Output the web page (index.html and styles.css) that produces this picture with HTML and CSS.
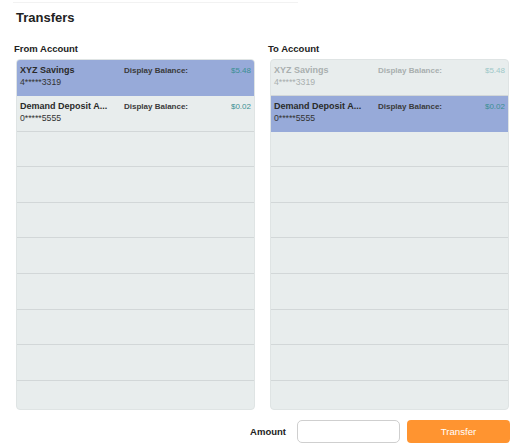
FILE: index.html
```html
<!DOCTYPE html>
<html>
<head>
<meta charset="utf-8">
<link rel="stylesheet" href="styles.css">
</head>
<body>
<div class="page">
  <div class="topline"></div>
  <h1 class="title">Transfers</h1>
  <div class="columns">
    <section class="col">
      <div class="label">From Account</div>
      <div class="list">
        <div class="row selected">
          <div class="name">XYZ Savings</div>
          <div class="dlabel">Display Balance:</div>
          <div class="bal">$5.48</div>
          <div class="num">4*****3319</div>
        </div>
        <div class="row">
          <div class="name" title="Demand Deposit Account">Demand Deposit A...</div>
          <div class="dlabel">Display Balance:</div>
          <div class="bal">$0.02</div>
          <div class="num">0*****5555</div>
        </div>
        <div class="row"></div>
        <div class="row"></div>
        <div class="row"></div>
        <div class="row"></div>
        <div class="row"></div>
        <div class="row"></div>
        <div class="row"></div>
        <div class="row"></div>
      </div>
    </section>
    <section class="col">
      <div class="label">To Account</div>
      <div class="list">
        <div class="row disabled">
          <div class="name">XYZ Savings</div>
          <div class="dlabel">Display Balance:</div>
          <div class="bal">$5.48</div>
          <div class="num">4*****3319</div>
        </div>
        <div class="row selected">
          <div class="name" title="Demand Deposit Account">Demand Deposit A...</div>
          <div class="dlabel">Display Balance:</div>
          <div class="bal">$0.02</div>
          <div class="num">0*****5555</div>
        </div>
        <div class="row"></div>
        <div class="row"></div>
        <div class="row"></div>
        <div class="row"></div>
        <div class="row"></div>
        <div class="row"></div>
        <div class="row"></div>
        <div class="row"></div>
      </div>
    </section>
  </div>
  <div class="actions">
    <label class="amount-label" for="amt">Amount</label>
    <input id="amt" class="amount" type="text">
    <button class="transfer" type="button">Transfer</button>
  </div>
</div>
</body>
</html>
```

FILE: styles.css
```css
* { box-sizing: border-box; }
html, body { margin: 0; padding: 0; background: #fff; }
body {
  font-family: "Liberation Sans", Arial, sans-serif;
  color: #222;
}
.page {
  width: 512px;
  height: 447px;
  padding: 0 3px 0 16px;
  overflow: hidden;
}
.topline {
  margin-top: 2px;
  margin-left: -3px;
  width: 285px;
  height: 1px;
  background: #f2f2f2;
}
.title {
  margin: 6.5px 0 0 0;
  font-size: 13px;
  line-height: 16px;
  font-weight: bold;
  color: #222;
}
.columns {
  display: grid;
  grid-template-columns: 239px 239px;
  column-gap: 15px;
  margin-top: 17.7px;
}
.label {
  font-size: 9.5px;
  line-height: 12px;
  font-weight: bold;
  color: #222;
  margin-left: -2px;
  margin-bottom: 4.3px;
}
.list {
  height: 350.5px;
  background: #e8eded;
  border: 1px solid #dfe4e4;
  border-radius: 4px;
  overflow: hidden;
}
.row {
  height: 35.6px;
  border-bottom: 1px solid #d2d7d8;
  display: grid;
  grid-template-columns: 97px 1fr auto;
  grid-template-rows: 11px 12px;
  column-gap: 7px;
  align-items: start;
  padding: 4.8px 3px 0 3px;
}
.row.selected { background: #97aad9; border-bottom-color: #97aad9; }
.name {
  font-size: 9px;
  line-height: 11px;
  font-weight: bold;
  color: #2a2a2a;
  white-space: nowrap;
}
.dlabel {
  font-size: 8px;
  line-height: 11px;
  font-weight: bold;
  color: #3a3a3a;
  white-space: nowrap;
}
.bal {
  font-size: 8px;
  line-height: 11px;
  color: #3c8f93;
  text-align: right;
}
.num {
  grid-column: 1 / 2;
  font-size: 8.7px;
  line-height: 12px;
  color: #333;
  white-space: nowrap;
}
.row.disabled .name,
.row.disabled .dlabel,
.row.disabled .num { color: #a9afaf; }
.row.disabled .bal { color: #9ec8c8; }
.actions {
  display: flex;
  justify-content: flex-end;
  align-items: center;
  margin-top: 9.5px;
  margin-right: -1px;
}
.amount-label {
  font-size: 9.5px;
  font-weight: bold;
  color: #222;
  margin-right: 11px;
}
.amount {
  width: 103px;
  height: 22.5px;
  border: 1px solid #cfcfcf;
  border-radius: 5px;
  background: #fff;
  margin: 1px 7px 0 0;
  padding: 0 6px;
  font-family: inherit;
}
.transfer {
  width: 103px;
  height: 23px;
  border: 0;
  border-radius: 4px;
  background: #ff9430;
  color: #fff;
  font-family: inherit;
  font-size: 9.7px;
  padding: 0;
}
```
